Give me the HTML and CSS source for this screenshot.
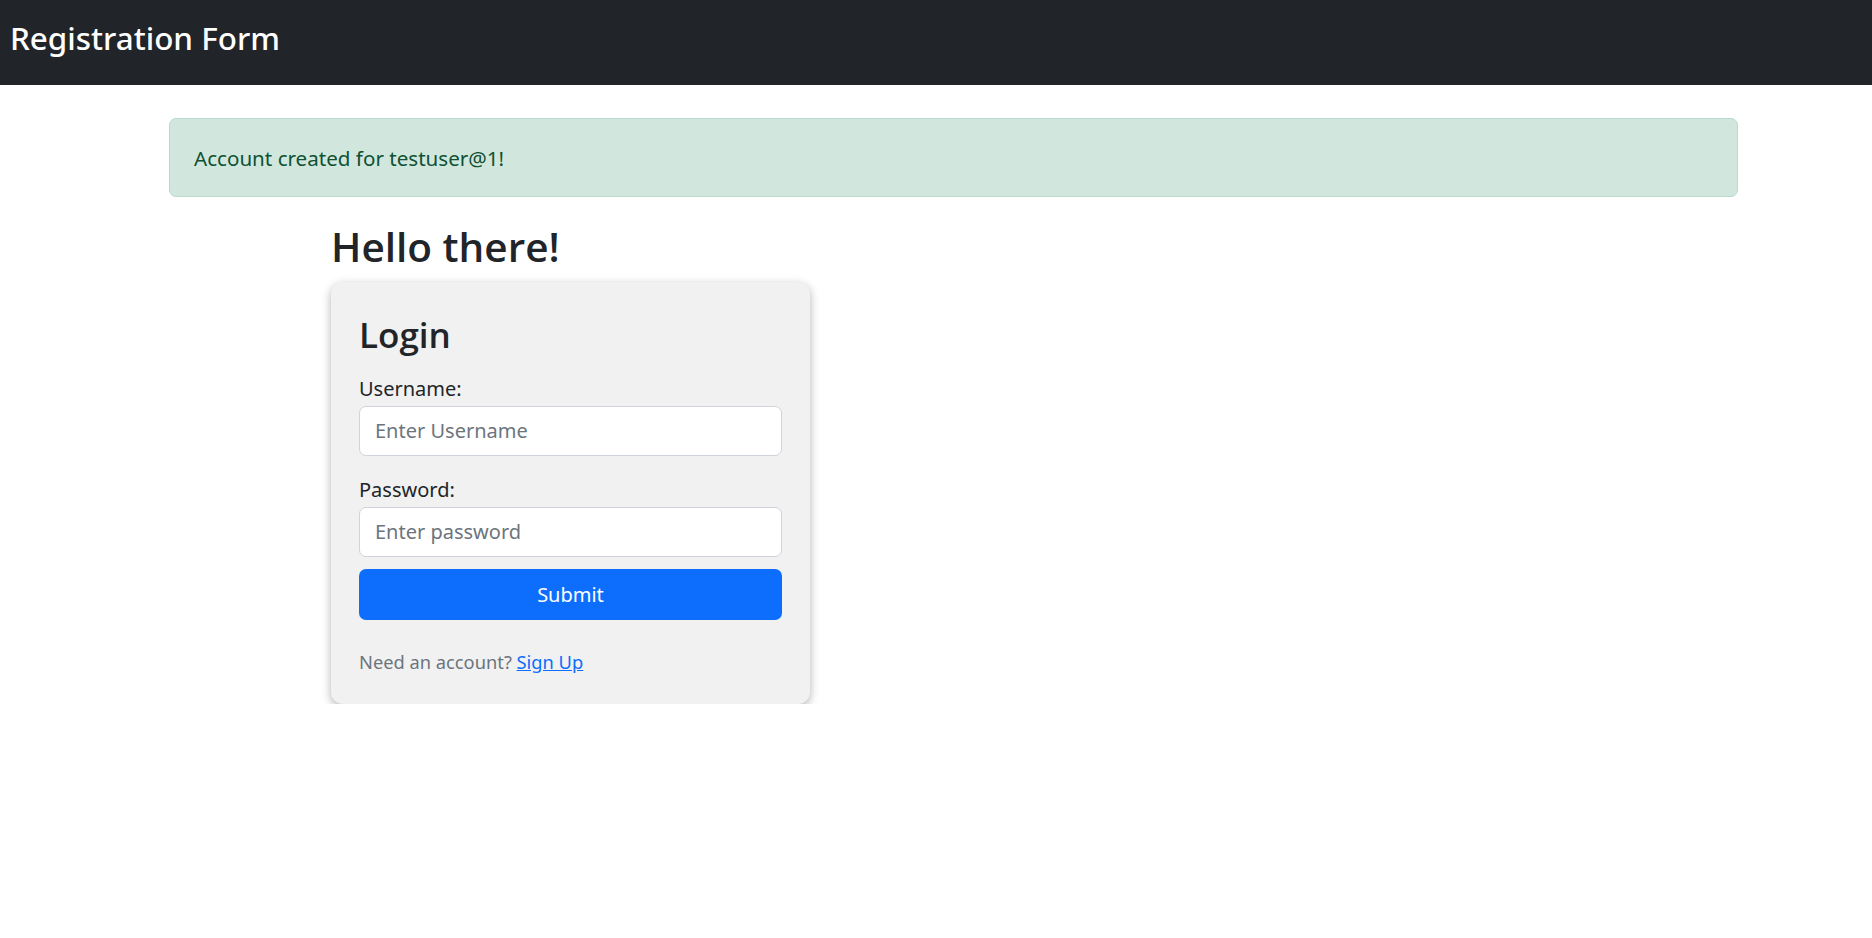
FILE: index.html
```html
<!DOCTYPE html>
<html lang="en">
<head>
    <meta charset="UTF-8">
    <meta name="viewport" content="width=device-width, initial-scale=1.0">
    <title>Registration Form</title>
    <link rel="stylesheet" href="styles.css">
</head>
<body>
    <header class="navbar">
        <span class="brand">Registration Form</span>
    </header>
    <main class="page">
        <div class="alert">Account created for testuser@1!</div>
        <section class="login-area">
            <h1>Hello there!</h1>
            <div class="card">
                <h2>Login</h2>
                <form>
                    <label for="username">Username:</label>
                    <input type="text" id="username" placeholder="Enter Username">
                    <label for="password">Password:</label>
                    <input type="password" id="password" class="last-input" placeholder="Enter password">
                    <button type="submit">Submit</button>
                </form>
                <p class="small-text">Need an account? <a href="#">Sign Up</a></p>
            </div>
        </section>
    </main>
</body>
</html>
```

FILE: styles.css
```css
body {
    margin: 0;
    font-family: "Noto Sans", sans-serif;
    font-size: 20px;
    color: #212529;
    background: #fff;
}

.navbar {
    height: 85px;
    box-sizing: border-box;
    padding: 19px 10px 0;
    background: #212529;
}

.brand {
    display: block;
    font-size: 31.4px;
    line-height: 1.2;
    font-weight: 500;
    color: #fff;
}

.page {
    width: 1569px;
    margin-left: 169px;
    padding-top: 33px;
}

.alert {
    padding: 24px 24px 23px;
    font-size: 20.6px;
    line-height: 30px;
    background: #d1e7dd;
    border: 1px solid #badbcc;
    border-radius: 7px;
    color: #0f5132;
}

.login-area {
    padding-left: 162px;
}

h1,
h2 {
    font-family: "Open Sans", "Noto Sans", sans-serif;
    font-weight: 600;
}

h1 {
    margin: 25px 0 11px;
    font-size: 40.5px;
    line-height: 49px;
}

.card {
    width: 479px;
    box-sizing: border-box;
    padding: 31px 28px 29px;
    background: #f1f1f1;
    border-radius: 12px;
    box-shadow: 0 3px 10px rgba(0, 0, 0, 0.3);
}

h2 {
    margin: 0 0 18px;
    font-size: 35px;
    line-height: 43px;
}

label {
    display: block;
    line-height: 1.5;
    margin-bottom: 2px;
}

input {
    display: block;
    width: 100%;
    box-sizing: border-box;
    padding: 9px 15px;
    margin: 0 0 19px;
    font-family: inherit;
    font-size: 20px;
    line-height: 1.5;
    color: #212529;
    background: #fff;
    border: 1px solid #ced4da;
    border-radius: 7px;
}

input::placeholder {
    color: #6c757d;
}

.last-input {
    margin-bottom: 12px;
}

button {
    display: block;
    width: 100%;
    height: 51px;
    font-family: inherit;
    font-size: 20px;
    color: #fff;
    background: #0d6efd;
    border: none;
    border-radius: 7px;
    cursor: pointer;
}

.small-text {
    margin: 28px 0 0;
    font-size: 18.3px;
    line-height: 27px;
    color: #6c757d;
}

.small-text a {
    color: #0d6efd;
}
```
